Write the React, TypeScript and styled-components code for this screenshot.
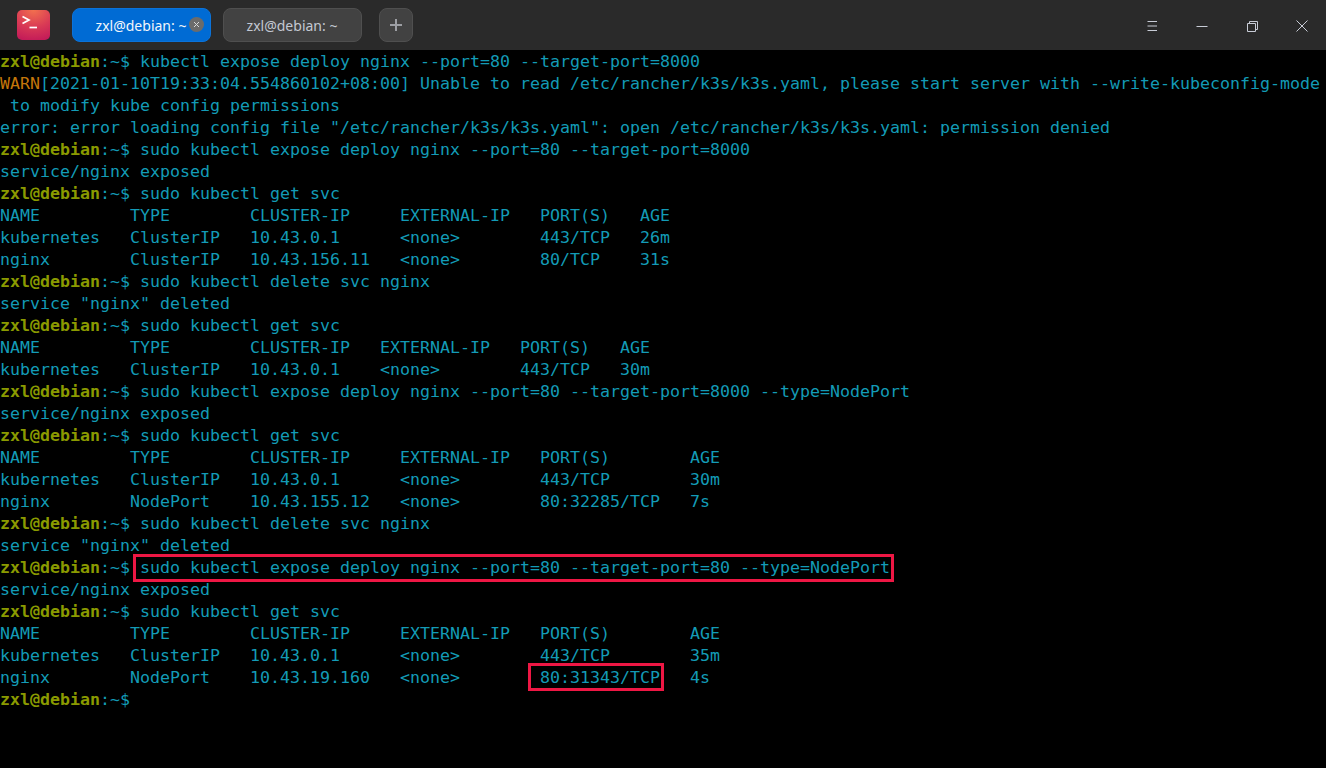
import React from 'react';
import styled, { createGlobalStyle } from 'styled-components';

const GlobalStyle = createGlobalStyle`
  html, body {
    margin: 0;
    padding: 0;
    background: #000;
    overflow: hidden;
  }
`;

const Window = styled.div`
  width: 1326px;
  height: 768px;
  display: flex;
  flex-direction: column;
  background: #000;
`;

const TitleBar = styled.header`
  height: 50px;
  flex: none;
  display: flex;
  align-items: center;
  background: #2a2a2a;
  padding: 0 0 0 17px;
  font-family: "Noto Sans", sans-serif;
`;

const Logo = styled.div`
  width: 33px;
  height: 30px;
  margin-right: 22px;
  border-radius: 5px;
  background: radial-gradient(ellipse 42px 36px at 50% 0%, #f2704e 0%, #d93a55 48%, #bb0f5a 100%);
  display: flex;
`;

const Tab = styled.div<{ $active?: boolean }>`
  position: relative;
  width: 139px;
  height: 34px;
  box-sizing: border-box;
  margin-right: 12px;
  padding-right: 1px;
  border-radius: 8px;
  display: flex;
  align-items: center;
  justify-content: center;
  font-size: 14px;
  background: ${p => (p.$active ? '#006bd4' : '#424242')};
  border: 1px solid ${p => (p.$active ? '#0b73da' : '#4f4f4f')};
  color: ${p => (p.$active ? '#f2f6fb' : '#c3c8d2')};
`;

const TabClose = styled.span`
  position: absolute;
  right: 6px;
  top: 8px;
  width: 15px;
  height: 15px;
  border-radius: 50%;
  background: #6b6b6b;
  display: flex;
  align-items: center;
  justify-content: center;
`;

const NewTab = styled.div`
  width: 34px;
  height: 34px;
  box-sizing: border-box;
  margin-left: 5px;
  border-radius: 8px;
  background: #424242;
  border: 1px solid #4f4f4f;
  display: flex;
  align-items: center;
  justify-content: center;
`;

const WindowControls = styled.div`
  margin-left: auto;
  display: flex;
  align-items: center;
  padding: 2px 18px 0 0;
  gap: 38px;
`;

const ControlIcon = styled.svg`
  width: 12px;
  height: 12px;
  display: block;
  overflow: visible;
  fill: none;
  stroke: #c8ccd6;
  stroke-width: 1;
`;

const Terminal = styled.main`
  flex: 1;
  padding-top: 1px;
  font-family: "DejaVu Sans Mono", monospace;
  font-size: 16.61px;
  line-height: 22px;
  color: #139bb6;
  white-space: pre;
  font-variant-ligatures: none;
`;

const Line = styled.div`
  height: 22px;
`;

const Prompt = styled.span`
  font-weight: bold;
  color: #8a9a00;
`;

const Warn = styled.span`
  color: #c4760a;
`;

const Marked = styled.span`
  position: relative;
  &::after {
    content: '';
    position: absolute;
    border: 3px solid #ee1744;
    box-sizing: border-box;
  }
`;

const CommandMark = styled(Marked)`
  &::after {
    left: -7px;
    right: -4px;
    top: -4px;
    bottom: -5px;
  }
`;

const PortMark = styled(Marked)`
  &::after {
    left: -12px;
    right: -4px;
    top: -5px;
    bottom: -4px;
  }
`;

const PromptText = () => (
  <>
    <Prompt>zxl@debian</Prompt>:~$
  </>
);

const Cmd = ({ children }: { children?: React.ReactNode }) => (
  <Line>
    <PromptText /> {children}
  </Line>
);

export default function App() {
  return (
    <Window>
      <GlobalStyle />
      <TitleBar>
        <Logo>
          <svg width="33" height="30" viewBox="0 0 33 30" fill="none" stroke="#fff" strokeWidth="1.7">
            <path d="M5.5 6.5 12 10 5.5 13.5" />
            <path d="M12.5 17.5H20" />
          </svg>
        </Logo>
        <Tab $active>
          zxl@debian: ~
          <TabClose>
            <svg width="7" height="7" viewBox="0 0 7 7" stroke="#d8d8d8" strokeWidth="1" fill="none">
              <path d="M1 1 6 6M6 1 1 6" />
            </svg>
          </TabClose>
        </Tab>
        <Tab>zxl@debian: ~</Tab>
        <NewTab>
          <svg width="12" height="12" viewBox="0 0 12 12" stroke="#9c9ea3" strokeWidth="2" fill="none">
            <path d="M6 0V12M0 6H12" />
          </svg>
        </NewTab>
        <WindowControls>
          <ControlIcon viewBox="0 0 12 12">
            <path d="M1.5 1.5H11M1.5 6H11M1.5 10.5H11" />
          </ControlIcon>
          <ControlIcon viewBox="0 0 12 12">
            <path d="M0.5 6.5H11.5" />
          </ControlIcon>
          <ControlIcon viewBox="0 0 12 12">
            <path d="M1.5 3.5H9.5V11.5H1.5Z" />
            <path d="M3.5 3.5V1.5H11.5V9.5H9.5" />
          </ControlIcon>
          <ControlIcon viewBox="0 0 12 12">
            <path d="M0.5 0.5 11.5 11.5M11.5 0.5 0.5 11.5" />
          </ControlIcon>
        </WindowControls>
      </TitleBar>
      <Terminal>
        <Cmd>kubectl expose deploy nginx --port=80 --target-port=8000</Cmd>
        <Line><Warn>WARN</Warn>[2021-01-10T19:33:04.554860102+08:00] Unable to read /etc/rancher/k3s/k3s.yaml, please start server with --write-kubeconfig-mode</Line>
        <Line> to modify kube config permissions</Line>
        <Line>error: error loading config file "/etc/rancher/k3s/k3s.yaml": open /etc/rancher/k3s/k3s.yaml: permission denied</Line>
        <Cmd>sudo kubectl expose deploy nginx --port=80 --target-port=8000</Cmd>
        <Line>service/nginx exposed</Line>
        <Cmd>sudo kubectl get svc</Cmd>
        <Line>NAME         TYPE        CLUSTER-IP     EXTERNAL-IP   PORT(S)   AGE</Line>
        <Line>kubernetes   ClusterIP   10.43.0.1      &lt;none&gt;        443/TCP   26m</Line>
        <Line>nginx        ClusterIP   10.43.156.11   &lt;none&gt;        80/TCP    31s</Line>
        <Cmd>sudo kubectl delete svc nginx</Cmd>
        <Line>service "nginx" deleted</Line>
        <Cmd>sudo kubectl get svc</Cmd>
        <Line>NAME         TYPE        CLUSTER-IP   EXTERNAL-IP   PORT(S)   AGE</Line>
        <Line>kubernetes   ClusterIP   10.43.0.1    &lt;none&gt;        443/TCP   30m</Line>
        <Cmd>sudo kubectl expose deploy nginx --port=80 --target-port=8000 --type=NodePort</Cmd>
        <Line>service/nginx exposed</Line>
        <Cmd>sudo kubectl get svc</Cmd>
        <Line>NAME         TYPE        CLUSTER-IP     EXTERNAL-IP   PORT(S)        AGE</Line>
        <Line>kubernetes   ClusterIP   10.43.0.1      &lt;none&gt;        443/TCP        30m</Line>
        <Line>nginx        NodePort    10.43.155.12   &lt;none&gt;        80:32285/TCP   7s</Line>
        <Cmd>sudo kubectl delete svc nginx</Cmd>
        <Line>service "nginx" deleted</Line>
        <Cmd><CommandMark>sudo kubectl expose deploy nginx --port=80 --target-port=80 --type=NodePort</CommandMark></Cmd>
        <Line>service/nginx exposed</Line>
        <Cmd>sudo kubectl get svc</Cmd>
        <Line>NAME         TYPE        CLUSTER-IP     EXTERNAL-IP   PORT(S)        AGE</Line>
        <Line>kubernetes   ClusterIP   10.43.0.1      &lt;none&gt;        443/TCP        35m</Line>
        <Line>nginx        NodePort    10.43.19.160   &lt;none&gt;        <PortMark>80:31343/TCP</PortMark>   4s</Line>
        <Line><PromptText /></Line>
      </Terminal>
    </Window>
  );
}
